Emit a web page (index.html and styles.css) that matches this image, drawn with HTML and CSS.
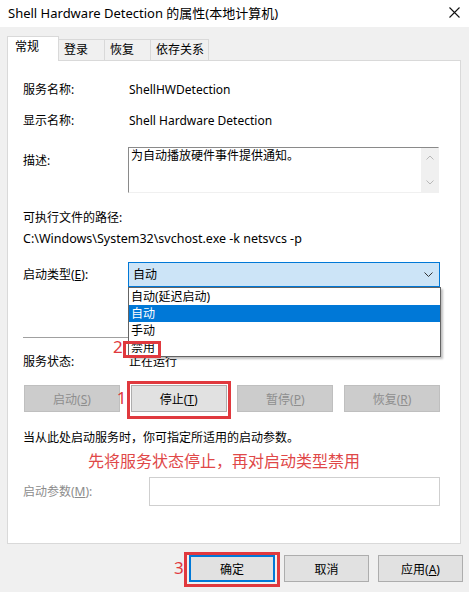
FILE: index.html
```html
<!DOCTYPE html>
<html lang="zh-CN">
<head>
<meta charset="utf-8">
<title>Shell Hardware Detection 的属性</title>
<link rel="stylesheet" href="styles.css">
</head>
<body>
<div class="dialog">
  <div class="titlebar">
    <span class="title">Shell Hardware Detection 的属性(本地计算机)</span>
    <svg class="close" width="11" height="11" viewBox="0 0 11 11"><path d="M0.5 0.5L10.5 10.5M10.5 0.5L0.5 10.5" stroke="#111" stroke-width="1.1" fill="none"/></svg>
  </div>
  <div class="tabs">
    <div class="tab active">常规</div>
    <div class="tab">登录</div>
    <div class="tab">恢复</div>
    <div class="tab wide">依存关系</div>
  </div>
  <div class="panel">
    <div class="row r-name"><span class="label">服务名称:</span><span class="value">ShellHWDetection</span></div>
    <div class="row r-display"><span class="label">显示名称:</span><span class="value">Shell Hardware Detection</span></div>
    <div class="row r-desc">
      <span class="label desc-label">描述:</span>
      <div class="desc">
        <span class="desc-text">为自动播放硬件事件提供通知。</span>
        <div class="scroll">
          <svg width="8" height="5" viewBox="0 0 8 5"><path d="M0.5 4.5L4 1L7.5 4.5" stroke="#b8b8b8" fill="none"/></svg>
          <svg width="8" height="5" viewBox="0 0 8 5"><path d="M0.5 0.5L4 4L7.5 0.5" stroke="#b8b8b8" fill="none"/></svg>
        </div>
      </div>
    </div>
    <div class="path-label">可执行文件的路径:</div>
    <div class="path">C:\Windows\System32\svchost.exe -k netsvcs -p</div>
    <div class="row r-start">
      <span class="label">启动类型(<u>E</u>):</span>
      <div class="combo">
        <span class="combo-text">自动</span>
        <svg width="9" height="5" viewBox="0 0 9 5"><path d="M0.5 0.5L4.5 4.5L8.5 0.5" stroke="#333" fill="none"/></svg>
        <ul class="list">
          <li>自动(延迟启动)</li>
          <li class="sel">自动</li>
          <li>手动</li>
          <li class="marked"><span class="num num2">2</span>禁用<span class="redbox box2"></span></li>
        </ul>
      </div>
    </div>
    <div class="sep"></div>
    <div class="row r-status"><span class="label">服务状态:</span><span class="value">正在运行</span></div>
    <div class="btnrow">
      <button class="btn disabled">启动(<u>S</u>)</button>
      <button class="btn marked"><span class="num num1">1</span>停止(<u>T</u>)<span class="redbox box1"></span></button>
      <button class="btn disabled">暂停(<u>P</u>)</button>
      <button class="btn disabled">恢复(<u>R</u>)</button>
    </div>
    <div class="hint">当从此处启动服务时，你可指定所适用的启动参数。</div>
    <div class="note">先将服务状态停止，再对启动类型禁用</div>
    <div class="row r-param">
      <span class="label muted">启动参数(<u>M</u>):</span>
      <div class="param"></div>
    </div>
  </div>
  <div class="footer">
    <button class="btn fbtn ok marked"><span class="num num3">3</span>确定<span class="redbox box3"></span></button>
    <button class="btn fbtn">取消</button>
    <button class="btn fbtn">应用(<u>A</u>)</button>
  </div>
</div>
</body>
</html>
```

FILE: styles.css
```css
* { box-sizing: border-box; }
html, body { margin: 0; padding: 0; }
body {
  width: 469px;
  height: 592px;
  overflow: hidden;
  background: #f0f0f0;
  font-family: "Noto Sans", "Noto Sans CJK SC", sans-serif;
  font-size: 12px;
  color: #000;
}
.dialog { width: 469px; height: 592px; display: flex; flex-direction: column; }

.titlebar {
  height: 27px;
  background: #fff;
  display: flex;
  align-items: center;
  justify-content: space-between;
  padding: 0 9px 1px 8px;
}
.title { font-size: 13px; line-height: 18px; color: #000; }
.close { margin-top: -2px; }

.tabs {
  display: flex;
  align-items: flex-end;
  padding: 9px 0 0 7px;
  height: 33px;
}
.tab {
  height: 21px;
  width: 47px;
  border: 1px solid #d9d9d9;
  border-bottom: none;
  margin-left: -1px;
  padding-left: 5px;
  line-height: 19px;
  font-size: 12px;
  background: #f0f0f0;
}
.tab.wide { width: 59px; }
.tab.active {
  height: 25px;
  width: 52px;
  margin-left: 0;
  margin-bottom: -1px;
  background: #fff;
  position: relative;
  z-index: 1;
  padding-left: 7px;
  line-height: 20px;
}

.panel {
  margin-left: 7px;
  width: 454px;
  height: 484px;
  background: #fff;
  border: 1px solid #d9d9d9;
  padding: 0 20px 0 15px;
  display: flex;
  flex-direction: column;
}

.row { display: flex; align-items: center; }
.label { width: 105px; flex: none; line-height: 18px; }
.value { line-height: 18px; padding-left: 1px; }
.muted { color: #8c8c8c; }

.r-name { margin-top: 20px; }
.r-display { margin-top: 13px; }
.r-desc { margin-top: 17px; align-items: flex-start; }
.desc-label { margin-top: 5px; }
.desc {
  width: 311px;
  height: 46px;
  border-top: 1px solid #8a8a8a;
  border-left: 1px solid #8a8a8a;
  border-right: 1px solid #f0f0f0;
  border-bottom: 1px solid #f0f0f0;
  display: flex;
  justify-content: space-between;
}
.desc-text { line-height: 16px; padding-left: 2px; }
.scroll {
  width: 17px;
  background: #f0f0f0;
  display: flex;
  flex-direction: column;
  justify-content: space-between;
  align-items: center;
  padding: 7px 0 7px;
}

.path-label { margin-top: 16px; line-height: 18px; }
.path { margin-top: 3px; line-height: 18px; font-size: 12.5px; }

.r-start { margin-top: 14px; }
.combo {
  position: relative;
  width: 312px;
  height: 25px;
  background: #cce4f7;
  border: 1px solid #0078d7;
  display: flex;
  align-items: center;
  justify-content: space-between;
  padding: 0 6px 0 4px;
}
.combo-text { line-height: 18px; }
.list {
  position: absolute;
  top: 24px;
  left: -1px;
  width: 313px;
  margin: 0;
  padding: 0;
  list-style: none;
  background: #fff;
  border: 1px solid #646464;
  box-shadow: 2px 2px 2px rgba(0, 0, 0, 0.25);
  z-index: 5;
}
.list li {
  height: 17px;
  line-height: 17px;
  padding-left: 2px;
  position: relative;
}
.list li.sel { background: #0078d7; color: #fff; }

.num {
  position: absolute;
  color: #e0393e;
  font-size: 17px;
  line-height: 18px;
  font-family: "Noto Sans", sans-serif;
}
.redbox {
  position: absolute;
  border: 3px solid #e0393e;
  pointer-events: none;
}
.num2 { left: -16px; top: -1px; }
.box2 { left: -6px; top: 2px; width: 38px; height: 17px; }

.sep { margin-top: 50px; height: 1px; background: #a0a0a0; width: 417px; }

.r-status { margin-top: 15px; }

.btnrow {
  margin-top: 14px;
  margin-left: 1px;
  display: flex;
  justify-content: space-between;
  width: 416px;
}
.btn {
  font-family: "Noto Sans", "Noto Sans CJK SC", sans-serif;
  font-size: 12px;
  color: #000;
  width: 96px;
  height: 27px;
  padding: 0;
  background: #e1e1e1;
  border: 1px solid #adadad;
  position: relative;
}
.btn.disabled { background: #cccccc; border-color: #bfbfbf; color: #8e8e8e; }
.num1 { left: -15px; top: 3px; }
.box1 { left: -5px; top: -5px; right: -5px; bottom: -8px; }

.hint { margin-top: 17px; line-height: 18px; }
.note {
  margin-top: 3px;
  margin-left: 65px;
  color: #e04848;
  font-size: 16px;
  line-height: 22px;
}

.r-param { margin-top: 5px; }
.r-param .label { width: 126px; }
.param {
  width: 291px;
  height: 29px;
  border: 1px solid #cfcfcf;
  background: #fff;
}

.footer {
  display: flex;
  justify-content: flex-end;
  gap: 9px;
  padding: 11px 6px 0 0;
}
.fbtn { width: 85px; }
.fbtn.ok { width: 86px; border: 2px solid #0078d7; }
.num3 { left: -17px; top: 2px; }
.box3 { left: -7px; top: -5px; right: -7px; bottom: -7px; }
```
